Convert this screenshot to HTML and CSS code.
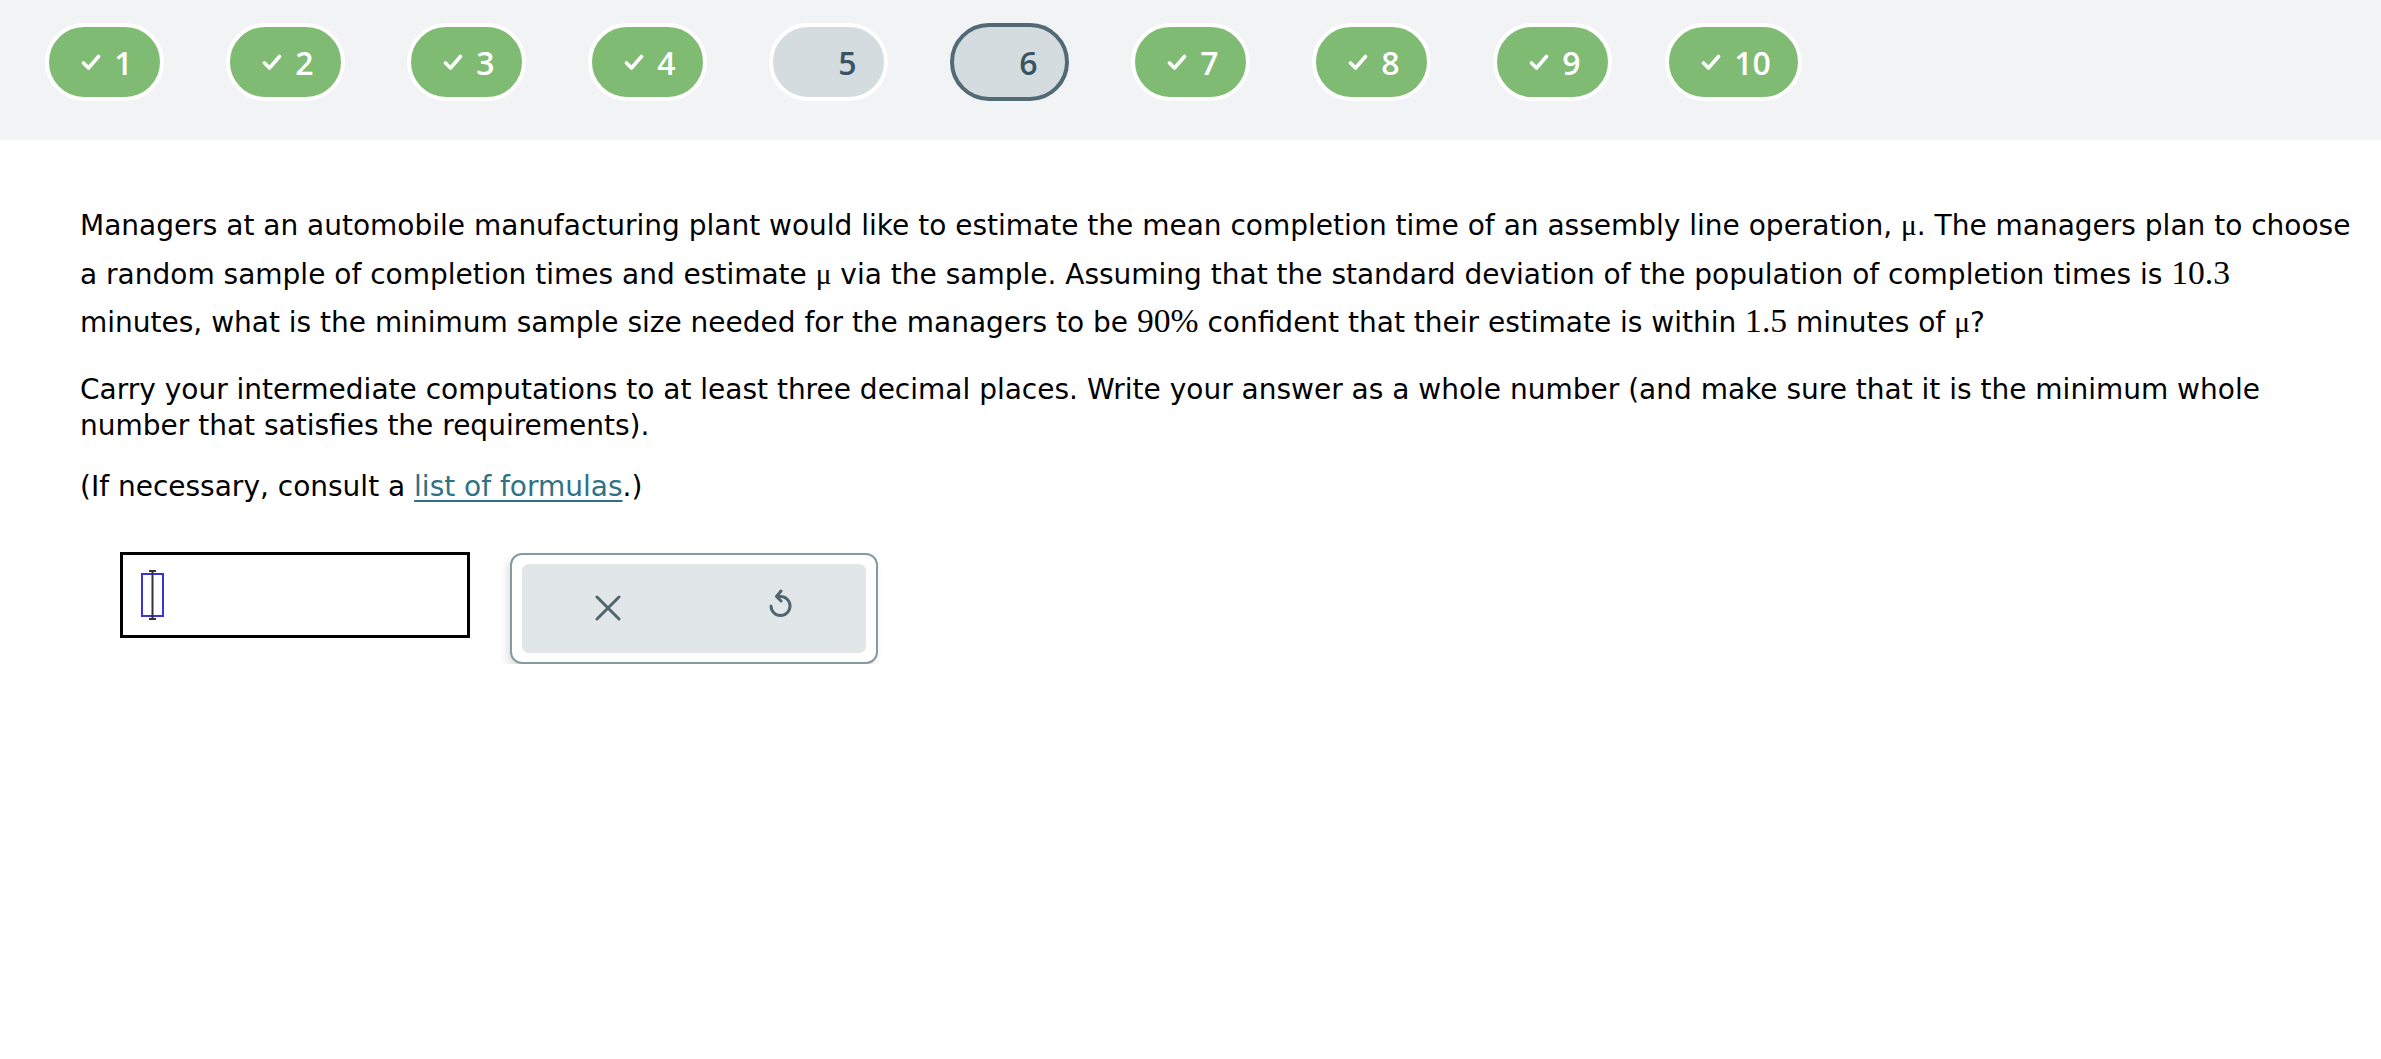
FILE: index.html
```html
<!DOCTYPE html>
<html>
<head>
<meta charset="utf-8">
<link rel="stylesheet" href="styles.css">
</head>
<body>
<nav class="topbar">
  <div class="slot"><span class="pill done"><svg class="chk" viewBox="0 0 20 17"><path d="M2.5 9 L7.5 14 L17.5 2.5"/></svg><span class="n">1</span></span></div>
  <div class="slot"><span class="pill done"><svg class="chk" viewBox="0 0 20 17"><path d="M2.5 9 L7.5 14 L17.5 2.5"/></svg><span class="n">2</span></span></div>
  <div class="slot"><span class="pill done"><svg class="chk" viewBox="0 0 20 17"><path d="M2.5 9 L7.5 14 L17.5 2.5"/></svg><span class="n">3</span></span></div>
  <div class="slot"><span class="pill done"><svg class="chk" viewBox="0 0 20 17"><path d="M2.5 9 L7.5 14 L17.5 2.5"/></svg><span class="n">4</span></span></div>
  <div class="slot"><span class="pill todo"><svg class="chk hidden" viewBox="0 0 20 17"></svg><span class="n">5</span></span></div>
  <div class="slot"><span class="pill todo current"><svg class="chk hidden" viewBox="0 0 20 17"></svg><span class="n">6</span></span></div>
  <div class="slot"><span class="pill done"><svg class="chk" viewBox="0 0 20 17"><path d="M2.5 9 L7.5 14 L17.5 2.5"/></svg><span class="n">7</span></span></div>
  <div class="slot"><span class="pill done"><svg class="chk" viewBox="0 0 20 17"><path d="M2.5 9 L7.5 14 L17.5 2.5"/></svg><span class="n">8</span></span></div>
  <div class="slot"><span class="pill done"><svg class="chk" viewBox="0 0 20 17"><path d="M2.5 9 L7.5 14 L17.5 2.5"/></svg><span class="n">9</span></span></div>
  <div class="slot"><span class="pill done"><svg class="chk" viewBox="0 0 20 17"><path d="M2.5 9 L7.5 14 L17.5 2.5"/></svg><span class="n">10</span></span></div>
</nav>
<main class="question">
  <p class="p1">Managers at an automobile manufacturing plant would like to estimate the mean completion time of an assembly line operation, <span class="mu">μ</span>. The managers plan to choose a random sample of completion times and estimate <span class="mu">μ</span> via the sample. Assuming that the standard deviation of the population of completion times is <span class="num">10.3</span> minutes, what is the minimum sample size needed for the managers to be <span class="num">90%</span> confident that their estimate is within <span class="num">1.5</span> minutes of <span class="mu">μ</span>?</p>
  <p class="p2">Carry your intermediate computations to at least three decimal places. Write your answer as a whole number (and make sure that it is the minimum whole number that satisfies the requirements).</p>
  <p class="p3">(If necessary, consult a <a class="link" href="#">list of formulas</a>.)</p>
  <div class="answer">
    <div class="input">
      <svg class="cursor" viewBox="0 0 24 52">
        <rect x="1" y="5" width="21" height="42" fill="none" stroke="#3a34d6" stroke-width="2"/>
        <line x1="11.5" y1="3" x2="11.5" y2="49" stroke="#333" stroke-width="2"/>
        <path d="M8 2 L15 2 M8 50 L15 50" stroke="#333" stroke-width="2"/>
      </svg>
    </div>
    <div class="tools">
      <div class="tools-inner">
        <svg class="ico" viewBox="0 0 26 26"><path d="M2 2 L24 24 M24 2 L2 24"/></svg>
        <svg class="ico undo" viewBox="0 0 26 32"><path d="M4 17 A9.5 9.5 0 1 0 13.5 7.5 H11"/><path d="M14 2 L9.5 7.5 L14 12"/></svg>
      </div>
    </div>
  </div>
</main>
</body>
</html>
```
FILE: styles.css
```css
html, body {
  margin: 0;
  padding: 0;
  background: #ffffff;
}

body {
  font-family: "DejaVu Sans", Verdana, sans-serif;
  color: #000;
}

.topbar {
  background: #f1f3f4;
  height: 140px;
  box-sizing: border-box;
  padding: 23px 0 0 14px;
  display: grid;
  grid-template-columns: repeat(10, 181px);
  align-items: start;
}

.slot {
  display: flex;
  justify-content: center;
}

.pill {
  box-sizing: border-box;
  height: 78px;
  border: 4px solid #ffffff;
  border-radius: 39px;
  display: flex;
  align-items: center;
  padding: 0 27px 0 32px;
  gap: 13px;
  font-family: "Open Sans", sans-serif;
  font-weight: 600;
  font-size: 32px;
  line-height: 1;
}

.pill.done {
  background: #7fbb73;
  color: #ffffff;
}

.pill.todo {
  background: #d4dce0;
  color: #3a5361;
}

.pill.current {
  border-color: #526a76;
}

.chk {
  width: 20px;
  height: 17px;
  flex: none;
}

.chk path {
  fill: none;
  stroke: #ffffff;
  stroke-width: 3.6;
  stroke-linecap: round;
  stroke-linejoin: round;
}

.chk.hidden {
  visibility: hidden;
}

.n {
  display: block;
  padding-top: 1px;
}

.question {
  padding: 62px 20px 0 80px;
  font-size: 28px;
}

.question p {
  margin: 0;
}

.p1 {
  line-height: 48.6px;
}

.p2 {
  margin-top: 24px !important;
  line-height: 36px;
}

.p3 {
  margin-top: 25px !important;
  line-height: 35px;
}

.mu {
  font-family: "Liberation Serif", "Times New Roman", serif;
  font-size: 1.05em;
  line-height: 1;
}

.num {
  font-family: "Liberation Serif", "Times New Roman", serif;
  font-size: 1.2em;
  line-height: 1;
}

.link {
  color: #2f7285;
  text-decoration: underline;
  text-underline-offset: 4px;
}

.answer {
  display: flex;
  align-items: flex-start;
  gap: 40px;
  margin-top: 48px;
  padding-left: 40px;
}

.input {
  box-sizing: border-box;
  width: 350px;
  height: 86px;
  border: 3px solid #000;
  display: flex;
  align-items: center;
  padding-left: 18px;
}

.cursor {
  width: 24px;
  height: 52px;
}

.tools {
  box-sizing: border-box;
  width: 368px;
  height: 111px;
  margin-top: 1px;
  border: 2px solid #859aa1;
  border-radius: 12px;
  background: #ffffff;
  padding: 9px 10px;
  box-shadow: -3px 5px 8px rgba(0, 0, 0, 0.12);
}

.tools-inner {
  height: 100%;
  background: #e1e6e8;
  border-radius: 7px;
  display: grid;
  grid-template-columns: 1fr 1fr;
  align-items: center;
  justify-items: center;
}

.ico {
  width: 26px;
  height: 26px;
}

.ico.undo {
  width: 26px;
  height: 32px;
  margin-top: -6px;
}

.ico path {
  fill: none;
  stroke: #4f6570;
  stroke-width: 3;
  stroke-linecap: round;
  stroke-linejoin: round;
}
```
